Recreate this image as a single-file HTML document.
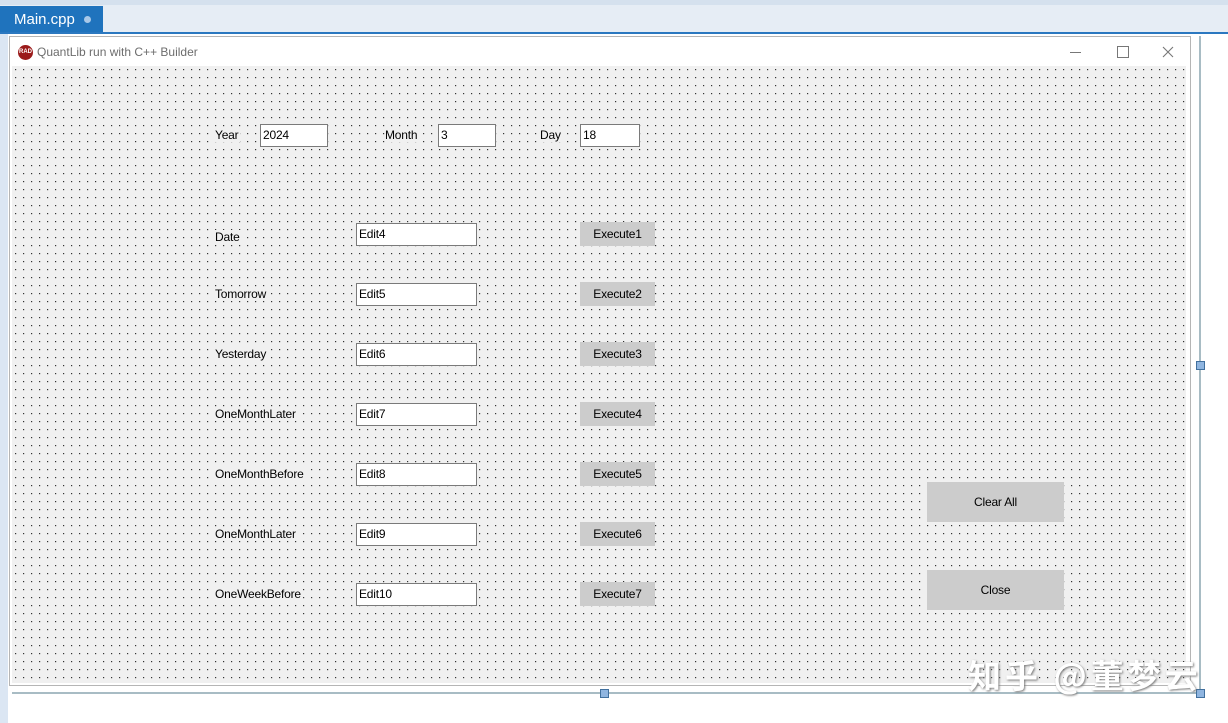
<!DOCTYPE html>
<html><head><meta charset="utf-8"><style>
body{margin:0;width:1228px;height:723px;position:relative;overflow:hidden;background:#fff;font-family:"Segoe UI","Liberation Sans",sans-serif;}
.a{position:absolute;}
.lbl{position:absolute;font-size:12px;color:#000;line-height:14px;background:#f0f0f0;padding-right:2px;letter-spacing:-0.2px;}
.ed{position:absolute;background:#fff;border:1px solid #7a7a7a;box-sizing:border-box;font-size:12px;line-height:20px;padding-left:2px;color:#000;letter-spacing:-0.2px;}
.bt{position:absolute;background:#cccccc;font-size:12px;color:#000;text-align:center;letter-spacing:-0.2px;}
</style></head><body>
<div class="a" style="left:0;top:0;width:1228px;height:32px;background:#e6edf5;"></div>
<div class="a" style="left:0;top:0;width:1228px;height:5px;background:#d5e1ee;"></div>
<div class="a" style="left:0;top:6px;width:103px;height:27px;background:#1f73bd;color:#fff;font-size:15px;line-height:27px;padding-left:14px;box-sizing:border-box;">Main.cpp<span style="display:inline-block;width:7px;height:7px;border-radius:50%;background:#a9c8e8;margin-left:9px;vertical-align:1px;"></span></div>
<div class="a" style="left:0;top:32px;width:1228px;height:2px;background:#2b78c0;"></div>
<div class="a" style="left:0;top:34px;width:8px;height:689px;background:#dbe6f3;"></div>
<div class="a" style="left:9px;top:36px;width:1182px;height:650px;border:1px solid #b5b5b5;box-sizing:border-box;background:#fff;"></div>
<div class="a" style="left:18px;top:45px;width:15px;height:15px;border-radius:50%;background:#9b1b1b;color:#fff;font-size:6px;line-height:15px;text-align:center;font-weight:bold;">RAD</div>
<div class="a" style="left:37px;top:45px;font-size:12px;color:#6d6d6d;line-height:15px;">QuantLib run with C++ Builder</div>
<div class="a" style="left:1070px;top:52px;width:11px;height:1px;background:#777;"></div>
<div class="a" style="left:1117px;top:46px;width:10px;height:10px;border:1px solid #777;"></div>
<svg class="a" style="left:1162px;top:46px" width="12" height="12"><path d="M1 1L11 11M11 1L1 11" stroke="#777" stroke-width="1.1"/></svg>
<svg class="a" style="left:12px;top:66px" width="1174" height="617">
<defs><pattern id="p" x="3" y="3" width="8" height="8" patternUnits="userSpaceOnUse"><rect width="8" height="8" fill="#f0f0f0"/><rect x="0" y="0" width="1.2" height="1.2" fill="#333"/></pattern></defs>
<rect width="1174" height="617" fill="url(#p)"/></svg>
<div class="a" style="left:1199px;top:36px;width:2px;height:658px;background:#a8bcc4;"></div>
<div class="a" style="left:12px;top:692px;width:1189px;height:2px;background:#a8bcc4;"></div>
<div class="a" style="left:1196px;top:361px;width:7px;height:7px;background:#8fb5e0;border:1px solid #41709e;"></div>
<div class="a" style="left:600px;top:689px;width:7px;height:7px;background:#8fb5e0;border:1px solid #41709e;"></div>
<div class="a" style="left:1196px;top:689px;width:7px;height:7px;background:#8fb5e0;border:1px solid #41709e;"></div>
<div class="lbl" style="left:215px;top:128px;">Year</div>
<div class="ed" style="left:260px;top:124px;width:68px;height:23px;">2024</div>
<div class="lbl" style="left:385px;top:128px;">Month</div>
<div class="ed" style="left:438px;top:124px;width:58px;height:23px;">3</div>
<div class="lbl" style="left:540px;top:128px;">Day</div>
<div class="ed" style="left:580px;top:124px;width:60px;height:23px;">18</div>
<div class="lbl" style="left:215px;top:230px;">Date</div>
<div class="ed" style="left:356px;top:223px;width:121px;height:23px;">Edit4</div>
<div class="bt" style="left:580px;top:222px;width:75px;height:24px;line-height:25px;">Execute1</div>
<div class="lbl" style="left:215px;top:287px;">Tomorrow</div>
<div class="ed" style="left:356px;top:283px;width:121px;height:23px;">Edit5</div>
<div class="bt" style="left:580px;top:282px;width:75px;height:24px;line-height:25px;">Execute2</div>
<div class="lbl" style="left:215px;top:347px;">Yesterday</div>
<div class="ed" style="left:356px;top:343px;width:121px;height:23px;">Edit6</div>
<div class="bt" style="left:580px;top:342px;width:75px;height:24px;line-height:25px;">Execute3</div>
<div class="lbl" style="left:215px;top:407px;">OneMonthLater</div>
<div class="ed" style="left:356px;top:403px;width:121px;height:23px;">Edit7</div>
<div class="bt" style="left:580px;top:402px;width:75px;height:24px;line-height:25px;">Execute4</div>
<div class="lbl" style="left:215px;top:467px;">OneMonthBefore</div>
<div class="ed" style="left:356px;top:463px;width:121px;height:23px;">Edit8</div>
<div class="bt" style="left:580px;top:462px;width:75px;height:24px;line-height:25px;">Execute5</div>
<div class="lbl" style="left:215px;top:527px;">OneMonthLater</div>
<div class="ed" style="left:356px;top:523px;width:121px;height:23px;">Edit9</div>
<div class="bt" style="left:580px;top:522px;width:75px;height:24px;line-height:25px;">Execute6</div>
<div class="lbl" style="left:215px;top:587px;">OneWeekBefore</div>
<div class="ed" style="left:356px;top:583px;width:121px;height:23px;">Edit10</div>
<div class="bt" style="left:580px;top:582px;width:75px;height:24px;line-height:25px;">Execute7</div>
<div class="bt" style="left:927px;top:482px;width:137px;height:40px;line-height:41px;">Clear All</div>
<div class="bt" style="left:927px;top:570px;width:137px;height:40px;line-height:41px;">Close</div>
<div class="a" style="left:968px;top:652px;font-family:'Noto Sans CJK SC',sans-serif;font-size:33px;line-height:44px;color:#fff;font-weight:bold;text-shadow:1px 1px 2px #777;letter-spacing:4px;">知乎 @董梦云</div>
</body></html>
